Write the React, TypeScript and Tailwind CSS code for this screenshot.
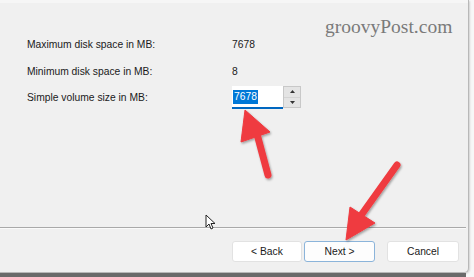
import React from "react";

const rows = [
  { label: "Maximum disk space in MB:", value: "7678" },
  { label: "Minimum disk space in MB:", value: "8" },
];

function Spinner() {
  return (
    <div className="flex flex-col w-[18px] h-[22px] border border-[#c8c8c8] bg-[#e4e4e4]">
      <div className="flex-1 flex items-center justify-center border-b border-[#d4d4d4]">
        <svg width="5" height="3" viewBox="0 0 5 3"><path d="M0 3 L2.5 0 L5 3 Z" fill="#333" /></svg>
      </div>
      <div className="flex-1 flex items-center justify-center">
        <svg width="5" height="3" viewBox="0 0 5 3"><path d="M0 0 L2.5 3 L5 0 Z" fill="#333" /></svg>
      </div>
    </div>
  );
}

export default function App() {
  return (
    <div
      className="relative w-[474px] h-[277px] overflow-hidden bg-[#f7f7f7]"
      style={{ fontFamily: "'Liberation Sans', Arial, sans-serif" }}
    >
      {/* Dialog */}
      <div className="w-[469px] h-[273px] bg-[#f0f0f0] border-r border-b border-[#b8b8b8] rounded-br-[5px] flex flex-col shadow-[1px_1px_2px_rgba(0,0,0,0.15)]">
        <div className="h-[3px] bg-[#f6f6f6]" />
        <div className="flex-1 pl-[27px] pt-[33px]">
          <div className="grid grid-cols-[205px_1fr] text-[10.3px] text-[#1a1a1a]">
            {rows.map((r) => (
              <React.Fragment key={r.label}>
                <div className="h-[18px] leading-[18px]">{r.label}</div>
                <div className="h-[18px] leading-[18px]">{r.value}</div>
                <div className="h-[9px] col-span-2" />
              </React.Fragment>
            ))}
            <div className="h-[23px] leading-[23px] mt-[-4px]">Simple volume size in MB:</div>
            <div className="flex h-[23px] mt-[-4px]">
              <div className="w-[51px] h-[23px] bg-white border-b-2 border-[#0067c0] flex items-center pl-[1px]">
                <span className="bg-[#0078d7] text-white leading-[14px] px-[1px]">7678</span>
              </div>
              <Spinner />
            </div>
          </div>
        </div>
        {/* Separator */}
        <div className="h-[2px] border-t border-[#a9a9a9] bg-[#fafafa] mr-[2px]" />
        <div className="h-[43px] flex justify-end items-start pt-[12px] pr-[9px] text-[10.3px] text-[#1a1a1a]">
          <button className="w-[70px] h-[21px] bg-white border border-[#e2e2e2] rounded-[3px]">&lt; Back</button>
          <button className="w-[71px] h-[21px] ml-[2px] bg-[#fdfdfd] border border-[#8bb4da] rounded-[3px]">Next &gt;</button>
          <button className="w-[72px] h-[21px] ml-[12px] bg-white border border-[#e2e2e2] rounded-[3px]">Cancel</button>
        </div>
      </div>
      <div className="absolute left-0 bottom-0 w-[466px] h-[4px] bg-[#6a6a6a]" />

      {/* Watermark */}
      <div
        className="absolute left-[325px] top-[17px] text-[19.5px] text-[#7a7a7a] leading-none"
        style={{ fontFamily: "'Liberation Serif', 'DejaVu Serif', serif" }}
      >
        groovyPost.com
      </div>

      {/* Cursor */}
      <svg className="absolute left-[205px] top-[214px]" width="11" height="16" viewBox="0 0 11 16">
        <path d="M1 1 L1 13 L4 10 L6 15 L8 14 L6 9.5 L10 9.5 Z" fill="#fff" stroke="#222" strokeWidth="1" strokeLinejoin="round" />
      </svg>

      {/* Red arrows */}
      <svg className="absolute inset-0" width="474" height="277" viewBox="0 0 474 277">
        <defs>
          <filter id="sh" x="-20%" y="-20%" width="140%" height="140%">
            <feDropShadow dx="1" dy="1.5" stdDeviation="1.2" floodColor="#000" floodOpacity="0.35" />
          </filter>
        </defs>
        <g filter="url(#sh)" fill="#ef3b40" stroke="#ef3b40">
          <line x1="268" y1="175" x2="257" y2="134" strokeWidth="7" strokeLinecap="round" />
          <path d="M245 110 L241 142 L270 132 Z" strokeWidth="1" strokeLinejoin="round" />
          <line x1="397" y1="165" x2="362" y2="214" strokeWidth="7" strokeLinecap="round" />
          <path d="M346 240 L350 207 L375 223 Z" strokeWidth="1" strokeLinejoin="round" />
        </g>
      </svg>
    </div>
  );
}
